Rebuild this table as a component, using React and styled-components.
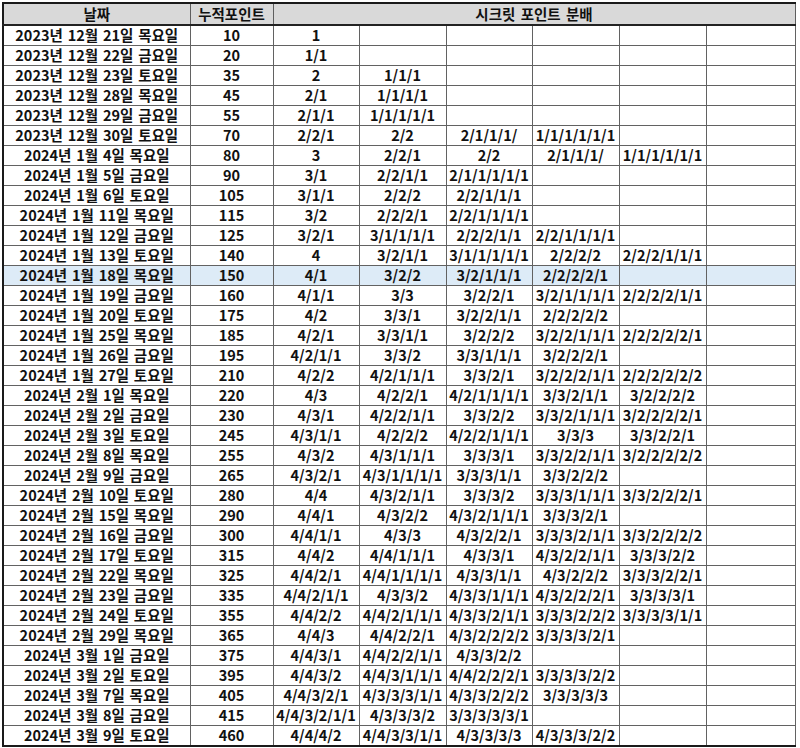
import React from "react";
import styled, { createGlobalStyle } from "styled-components";

const GlobalStyle = createGlobalStyle`
  body {
    margin: 0;
    background: #ffffff;
    font-family: "Noto Sans CJK KR", "Noto Sans", sans-serif;
  }
`;

const Sheet = styled.table`
  border-collapse: collapse;
  table-layout: fixed;
  width: 793px;
  margin: 2px 0 0 2px;
  border: 2px solid #1a1a1a;
  border-right: 1px solid #555555;
  color: #111111;
  font-size: 14.5px;
  font-weight: 700;
`;

const Col = styled.col`
  width: ${(p) => p.$w}px;
`;

const HeadCell = styled.th`
  height: 20px;
  padding: 0;
  line-height: 1;
  background: #d9d9d9;
  border: 1px solid #5e5e5e;
  border-bottom: 2px solid #222222;
  text-align: center;
  font-weight: 700;
  word-spacing: 2px;
  white-space: nowrap;
`;

const Row = styled.tr`
  background: ${(p) => (p.$highlight ? "#ddebf7" : "#ffffff")};
`;

const Cell = styled.td`
  height: 19px;
  padding: 0;
  line-height: 1;
  border: 1px solid #626262;
  border-left: ${(p) => (p.$first ? "2px solid #1a1a1a" : "1px solid #626262")};
  word-spacing: ${(p) => (p.$first ? "1.5px" : "0")};
  text-align: center;
  white-space: nowrap;
  overflow: hidden;
`;

const widths = [187, 83, 86, 87, 86, 87, 87, 89];

const rows = [
  ["2023년 12월 21일 목요일", "10", "1"],
  ["2023년 12월 22일 금요일", "20", "1/1"],
  ["2023년 12월 23일 토요일", "35", "2", "1/1/1"],
  ["2023년 12월 28일 목요일", "45", "2/1", "1/1/1/1"],
  ["2023년 12월 29일 금요일", "55", "2/1/1", "1/1/1/1/1"],
  ["2023년 12월 30일 토요일", "70", "2/2/1", "2/2", "2/1/1/1/", "1/1/1/1/1/1"],
  ["2024년 1월 4일 목요일", "80", "3", "2/2/1", "2/2", "2/1/1/1/", "1/1/1/1/1/1"],
  ["2024년 1월 5일 금요일", "90", "3/1", "2/2/1/1", "2/1/1/1/1/1"],
  ["2024년 1월 6일 토요일", "105", "3/1/1", "2/2/2", "2/2/1/1/1"],
  ["2024년 1월 11일 목요일", "115", "3/2", "2/2/2/1", "2/2/1/1/1/1"],
  ["2024년 1월 12일 금요일", "125", "3/2/1", "3/1/1/1/1", "2/2/2/1/1", "2/2/1/1/1/1"],
  ["2024년 1월 13일 토요일", "140", "4", "3/2/1/1", "3/1/1/1/1/1", "2/2/2/2", "2/2/2/1/1/1"],
  ["2024년 1월 18일 목요일", "150", "4/1", "3/2/2", "3/2/1/1/1", "2/2/2/2/1"],
  ["2024년 1월 19일 금요일", "160", "4/1/1", "3/3", "3/2/2/1", "3/2/1/1/1/1", "2/2/2/2/1/1"],
  ["2024년 1월 20일 토요일", "175", "4/2", "3/3/1", "3/2/2/1/1", "2/2/2/2/2"],
  ["2024년 1월 25일 목요일", "185", "4/2/1", "3/3/1/1", "3/2/2/2", "3/2/2/1/1/1", "2/2/2/2/2/1"],
  ["2024년 1월 26일 금요일", "195", "4/2/1/1", "3/3/2", "3/3/1/1/1", "3/2/2/2/1"],
  ["2024년 1월 27일 토요일", "210", "4/2/2", "4/2/1/1/1", "3/3/2/1", "3/2/2/2/1/1", "2/2/2/2/2/2"],
  ["2024년 2월 1일 목요일", "220", "4/3", "4/2/2/1", "4/2/1/1/1/1", "3/3/2/1/1", "3/2/2/2/2"],
  ["2024년 2월 2일 금요일", "230", "4/3/1", "4/2/2/1/1", "3/3/2/2", "3/3/2/1/1/1", "3/2/2/2/2/1"],
  ["2024년 2월 3일 토요일", "245", "4/3/1/1", "4/2/2/2", "4/2/2/1/1/1", "3/3/3", "3/3/2/2/1"],
  ["2024년 2월 8일 목요일", "255", "4/3/2", "4/3/1/1/1", "3/3/3/1", "3/3/2/2/1/1", "3/2/2/2/2/2"],
  ["2024년 2월 9일 금요일", "265", "4/3/2/1", "4/3/1/1/1/1", "3/3/3/1/1", "3/3/2/2/2"],
  ["2024년 2월 10일 토요일", "280", "4/4", "4/3/2/1/1", "3/3/3/2", "3/3/3/1/1/1", "3/3/2/2/2/1"],
  ["2024년 2월 15일 목요일", "290", "4/4/1", "4/3/2/2", "4/3/2/1/1/1", "3/3/3/2/1"],
  ["2024년 2월 16일 금요일", "300", "4/4/1/1", "4/3/3", "4/3/2/2/1", "3/3/3/2/1/1", "3/3/2/2/2/2"],
  ["2024년 2월 17일 토요일", "315", "4/4/2", "4/4/1/1/1", "4/3/3/1", "4/3/2/2/1/1", "3/3/3/2/2"],
  ["2024년 2월 22일 목요일", "325", "4/4/2/1", "4/4/1/1/1/1", "4/3/3/1/1", "4/3/2/2/2", "3/3/3/2/2/1"],
  ["2024년 2월 23일 금요일", "335", "4/4/2/1/1", "4/3/3/2", "4/3/3/1/1/1", "4/3/2/2/2/1", "3/3/3/3/1"],
  ["2024년 2월 24일 토요일", "355", "4/4/2/2", "4/4/2/1/1/1", "4/3/3/2/1/1", "3/3/3/2/2/2", "3/3/3/3/1/1"],
  ["2024년 2월 29일 목요일", "365", "4/4/3", "4/4/2/2/1", "4/3/2/2/2/2", "3/3/3/3/2/1"],
  ["2024년 3월 1일 금요일", "375", "4/4/3/1", "4/4/2/2/1/1", "4/3/3/2/2"],
  ["2024년 3월 2일 토요일", "395", "4/4/3/2", "4/4/3/1/1/1", "4/4/2/2/2/1", "3/3/3/3/2/2"],
  ["2024년 3월 7일 목요일", "405", "4/4/3/2/1", "4/3/3/3/1/1", "4/3/3/2/2/2", "3/3/3/3/3"],
  ["2024년 3월 8일 금요일", "415", "4/4/3/2/1/1", "4/3/3/3/2", "3/3/3/3/3/1"],
  ["2024년 3월 9일 토요일", "460", "4/4/4/2", "4/4/3/3/1/1", "4/3/3/3/3", "4/3/3/3/2/2"],
];

const highlighted = "2024년 1월 18일 목요일";

export default function App() {
  return (
    <>
      <GlobalStyle />
      <Sheet>
        <colgroup>
          {widths.map((w, i) => (
            <Col key={i} $w={w} />
          ))}
        </colgroup>
        <thead>
          <tr>
            <HeadCell>날짜</HeadCell>
            <HeadCell>누적포인트</HeadCell>
            <HeadCell colSpan={6}>시크릿 포인트 분배</HeadCell>
          </tr>
        </thead>
        <tbody>
          {rows.map((r) => {
            const cells = Array.from({ length: 8 }, (_, i) => r[i] || "");
            return (
              <Row key={r[0]} $highlight={r[0] === highlighted}>
                {cells.map((c, i) => (
                  <Cell key={i} $first={i === 0}>
                    {c}
                  </Cell>
                ))}
              </Row>
            );
          })}
        </tbody>
      </Sheet>
    </>
  );
}
